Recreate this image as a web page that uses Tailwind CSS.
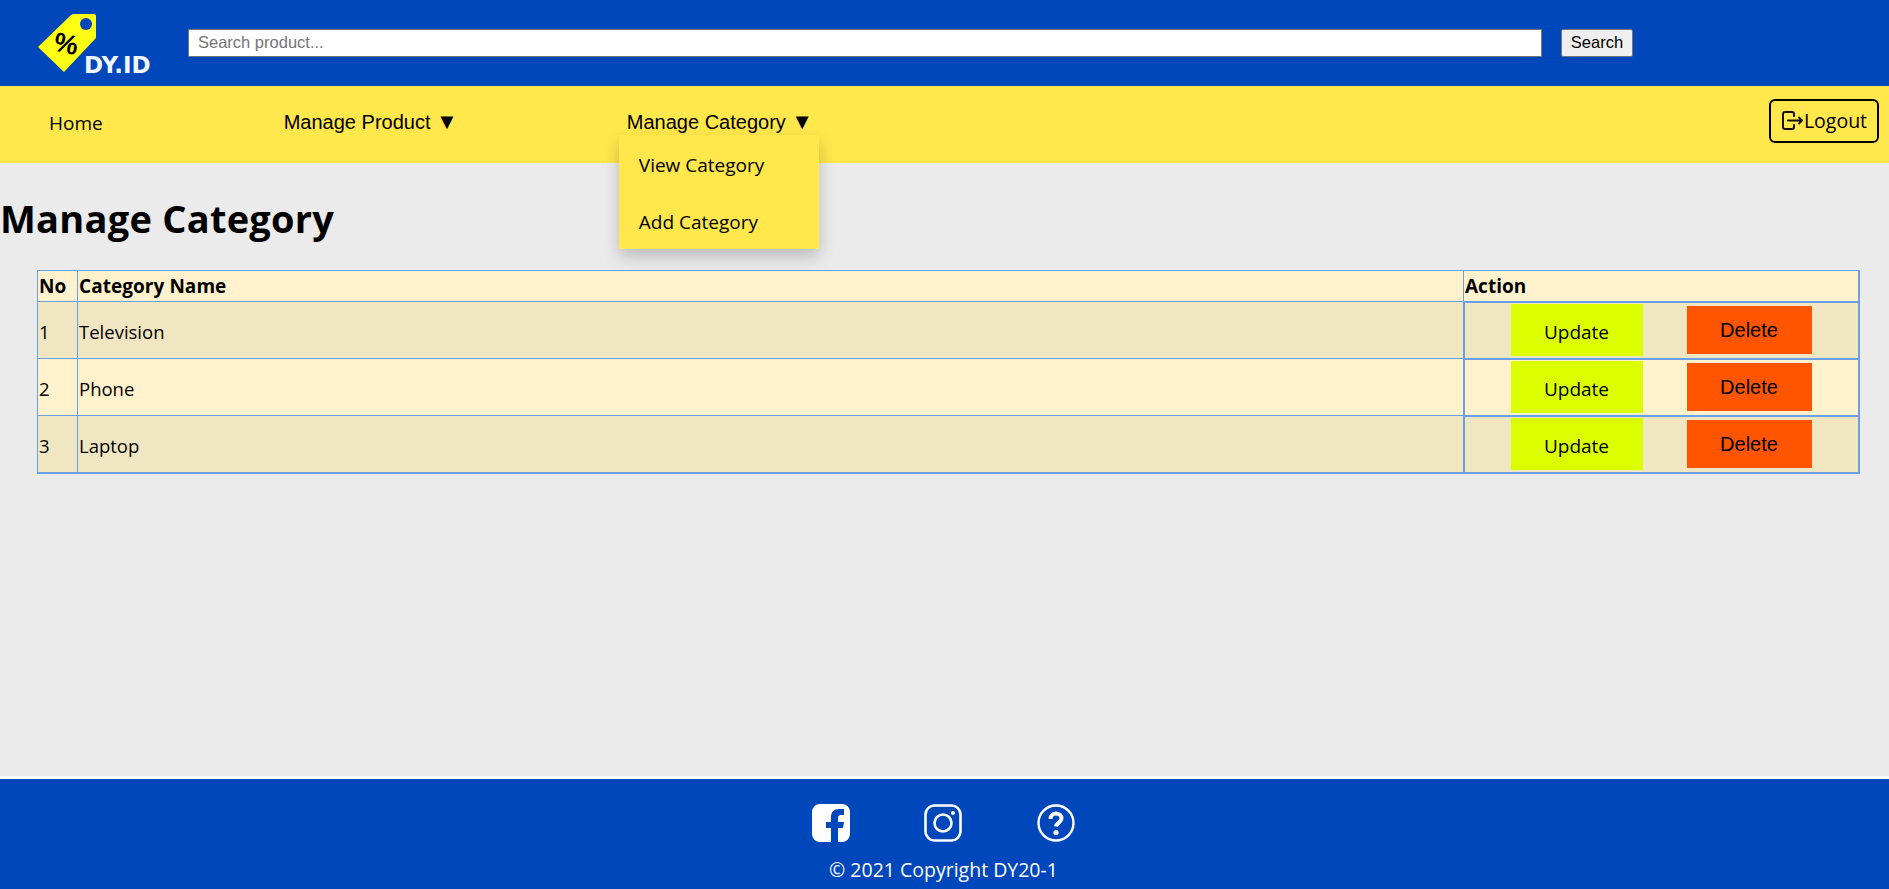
<!DOCTYPE html>
<html>
<head>
<meta charset="utf-8">
<script src="https://cdn.jsdelivr.net/npm/@tailwindcss/browser@4"></script>
</head>
<body class="h-[889px] overflow-hidden bg-white font-['Open_Sans',sans-serif] text-black">
<div class="flex h-[86px] items-center bg-[#0047bb]">
  <div class="relative ml-[37px] h-[64px] w-[114px] shrink-0">
    <svg class="absolute left-0 top-0" width="114" height="64" viewBox="0 0 114 64">
      <path d="M1 36 L34 4 Q35 3 37 3 L57 3 Q59 3 59 5 L59 26 Q59 27 58 28 L27 61 Z" fill="#ffff14"/>
      <circle cx="49" cy="13" r="6" fill="#0047bb"/>
    </svg>
    <span class="absolute left-[17px] top-[18px] rotate-[12deg] font-['Liberation_Sans',sans-serif] text-[27px] leading-[30px] font-bold text-black">%</span>
    <span class="absolute left-[47px] top-[41px] font-['DejaVu_Sans',sans-serif] text-[23px] leading-[26px] font-bold text-[#f2f6ff]">DY.ID</span>
  </div>
  <input class="ml-[37px] h-[28px] w-[1354px] border border-[#767676] bg-white px-[9px] pb-[1px] font-['Liberation_Sans',sans-serif] text-[16.500px] placeholder:text-[#757575]" placeholder="Search product...">
  <button class="ml-[19px] h-[28px] w-[72px] rounded-[2px] border border-[#767676] bg-[#efefef] pb-[1px] font-['Liberation_Sans',sans-serif] text-[16.500px]">Search</button>
</div>

<nav class="relative flex h-[77px] items-start bg-[#ffe74c]">
  <a class="ml-[49px] mt-[24px] text-[19px] leading-[27px]">Home</a>
  <a class="ml-[181px] mt-[23px] font-['Liberation_Sans',sans-serif] text-[20px] leading-[26px]">Manage Product <span class="text-[22px]">▼</span></a>
  <div class="relative ml-[169px]">
    <a class="mt-[23px] block font-['Liberation_Sans',sans-serif] text-[20px] leading-[26px]">Manage Category <span class="text-[22px]">▼</span></a>
    <div class="absolute left-[-8px] top-[49px] z-10 w-[200px] bg-[#ffe74c] shadow-[0_8px_16px_0_rgba(0,0,0,0.2)]">
      <a class="block h-[57px] px-[20px] pt-[17px] text-[19px] leading-[26px]">View Category</a>
      <a class="block h-[57px] px-[20px] pt-[17px] text-[19px] leading-[26px]">Add Category</a>
    </div>
  </div>
  <button class="absolute right-[10px] top-[13px] flex h-[44px] w-[110px] items-center justify-center rounded-[6px] border-2 border-black text-[19.500px] leading-[26px]">
    <svg width="22" height="22" viewBox="0 0 22 22" fill="none" stroke="#111" stroke-width="2" stroke-linecap="round" stroke-linejoin="round"><path d="M13 6V4a2 2 0 0 0-2-2H4a2 2 0 0 0-2 2v13a2 2 0 0 0 2 2h7a2 2 0 0 0 2-2v-2"/><path d="M7 10.500h14M18 7.500l3 3-3 3"/></svg>
    <span class="ml-[1px]">Logout</span>
  </button>
</nav>

<main class="h-[613px] bg-[#ebebeb]">
  <h1 class="pt-[30px] text-[38px] leading-[50px] font-bold tracking-[0.25px]">Manage Category</h1>
  <table class="ml-[37px] mt-[27px] w-[1821px] table-fixed border-collapse text-[18.500px]">
    <colgroup><col class="w-[40px]"><col class="w-[1386px]"><col class="w-[395px]"></colgroup>
    <thead>
      <tr class="h-[31px] bg-[#fff2cc] text-left text-[19px] leading-[26px]">
        <th class="border border-[#6aa0e8] px-[1px] py-0 font-bold">No</th>
        <th class="border border-[#6aa0e8] px-[1px] py-0 font-bold tracking-[0.05px]">Category Name</th>
        <th class="border border-r-2 border-[#6aa0e8] px-[1px] py-0 font-bold">Action</th>
      </tr>
    </thead>
    <tbody>
      <tr class="h-[57px] bg-[#f1e6c2]">
        <td class="border border-[#6aa0e8] px-[1px] pt-[3px]">1</td>
        <td class="border border-[#6aa0e8] px-[1px] pt-[3px]">Television</td>
        <td class="border-2 border-[#6aa0e8] p-0">
          <div class="flex h-[52px] items-start pl-[46px]">
            <button class="flex h-[52px] w-[132px] items-center justify-center bg-[#dcff00] pt-[4px] text-[19px]">Update</button>
            <button class="ml-[44px] mt-[2px] h-[48px] w-[125px] bg-[#ff5500] font-['Liberation_Sans',sans-serif] text-[20px]">Delete</button>
          </div>
        </td>
      </tr>
      <tr class="h-[57px] bg-[#fff2cc]">
        <td class="border border-[#6aa0e8] px-[1px] pt-[3px]">2</td>
        <td class="border border-[#6aa0e8] px-[1px] pt-[3px]">Phone</td>
        <td class="border-2 border-[#6aa0e8] p-0">
          <div class="flex h-[52px] items-start pl-[46px]">
            <button class="flex h-[52px] w-[132px] items-center justify-center bg-[#dcff00] pt-[4px] text-[19px]">Update</button>
            <button class="ml-[44px] mt-[2px] h-[48px] w-[125px] bg-[#ff5500] font-['Liberation_Sans',sans-serif] text-[20px]">Delete</button>
          </div>
        </td>
      </tr>
      <tr class="h-[57px] bg-[#f1e6c2]">
        <td class="border border-b-2 border-[#6aa0e8] px-[1px] pt-[4px]">3</td>
        <td class="border border-b-2 border-[#6aa0e8] px-[1px] pt-[4px]">Laptop</td>
        <td class="border-2 border-[#6aa0e8] p-0">
          <div class="flex h-[52px] items-start pl-[46px]">
            <button class="flex h-[52px] w-[132px] items-center justify-center bg-[#dcff00] pt-[4px] text-[19px]">Update</button>
            <button class="ml-[44px] mt-[2px] h-[48px] w-[125px] bg-[#ff5500] font-['Liberation_Sans',sans-serif] text-[20px]">Delete</button>
          </div>
        </td>
      </tr>
    </tbody>
  </table>
</main>

<footer class="mt-[3px] flex h-[110px] flex-col items-center bg-[#0047bb] text-white">
  <div class="mr-[3px] mt-[25px] flex h-[38px] items-center gap-[74.500px]">
    <svg width="38" height="38" viewBox="0 0 38 38"><path fill="#fff" fill-rule="evenodd" d="M8 0h22a8 8 0 0 1 8 8v22a8 8 0 0 1-8 8h-4V24h5l1-6h-6v-4c0-2 1-3 3-3h3V5h-5c-5 0-8 3-8 8v5h-5v6h5v14H8a8 8 0 0 1-8-8V8a8 8 0 0 1 8-8z"/></svg>
    <svg width="38" height="38" viewBox="0 0 38 38" fill="none" stroke="#fff" stroke-width="2.600"><rect x="1.500" y="1.500" width="35" height="35" rx="9"/><circle cx="19" cy="19" r="8.500"/><circle cx="29" cy="9" r="2" fill="#fff" stroke="none"/></svg>
    <svg width="38" height="38" viewBox="0 0 38 38" fill="none" stroke="#fff"><circle cx="19" cy="19" r="17.500" stroke-width="2.400"/><path d="M13.500 15c0-3.500 2.500-5.500 5.500-5.500s5.500 2 5.500 5c0 3.500-5 4.500-5.500 8" stroke-width="4"/><circle cx="19" cy="28.500" r="2.600" fill="#fff" stroke="none"/></svg>
  </div>
  <p class="mr-[2px] mt-[14px] text-[19.500px] leading-[27px]">© 2021 Copyright DY20-1</p>
</footer>
</body>
</html>
